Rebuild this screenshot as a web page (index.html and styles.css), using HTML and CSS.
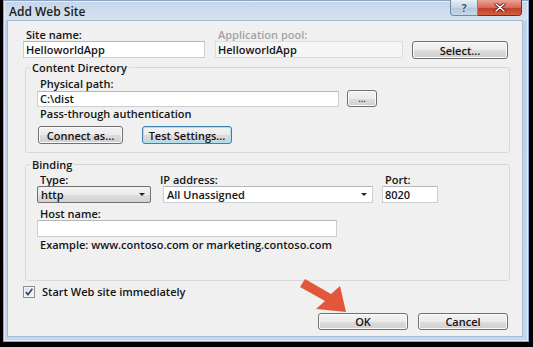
FILE: index.html
```html
<!DOCTYPE html>
<html lang="en">
<head>
    <meta charset="UTF-8">
    <meta name="viewport" content="width=device-width, initial-scale=1.0">
    <title>Add Web Site</title>
    <link rel="stylesheet" href="styles.css">
</head>
<body>
    <div class="window">
        <div class="titlebar">
            <span class="title">Add Web Site</span>
            <div class="caption-buttons">
                <span class="cap-btn help">?</span>
                <span class="cap-btn close">
                    <svg width="12" height="9" viewBox="0 0 12 9">
                        <path d="M2 1 L10 8 M10 1 L2 8" stroke="#5a1c14" stroke-width="3.2" stroke-linecap="round"/>
                        <path d="M2 1 L10 8 M10 1 L2 8" stroke="#ffffff" stroke-width="1.6" stroke-linecap="round"/>
                    </svg>
                </span>
            </div>
        </div>

        <div class="client">
            <div class="site-row">
                <div class="field site-name">
                    <label class="field-label">Site name:</label>
                    <div class="textbox">HelloworldApp</div>
                </div>
                <div class="field app-pool">
                    <label class="field-label disabled">Application pool:</label>
                    <div class="textbox readonly">HelloworldApp</div>
                </div>
                <button class="btn select-btn">Select...</button>
            </div>

            <fieldset class="group content-dir">
                <legend>Content Directory</legend>
                <label class="field-label">Physical path:</label>
                <div class="path-row">
                    <div class="textbox path-box">C:\dist</div>
                    <button class="btn browse-btn">...</button>
                </div>
                <div class="field-label">Pass-through authentication</div>
                <div class="auth-buttons">
                    <button class="btn connect-btn">Connect as...</button>
                    <button class="btn focused test-btn">Test Settings...</button>
                </div>
            </fieldset>

            <fieldset class="group binding">
                <legend>Binding</legend>
                <div class="binding-row">
                    <div class="field type-field">
                        <label class="field-label">Type:</label>
                        <div class="combo combo-button">http<span class="combo-arrow"></span></div>
                    </div>
                    <div class="field ip-field">
                        <label class="field-label">IP address:</label>
                        <div class="combo combo-edit">All Unassigned<span class="combo-arrow"></span></div>
                    </div>
                    <div class="field port-field">
                        <label class="field-label">Port:</label>
                        <div class="textbox">8020</div>
                    </div>
                </div>
                <label class="field-label host-label">Host name:</label>
                <div class="textbox host-box"></div>
                <div class="field-label example">Example: www.contoso.com or marketing.contoso.com</div>
            </fieldset>

            <div class="start-row">
                <span class="checkbox">
                    <svg width="10" height="10" viewBox="0 0 10 10">
                        <path d="M1.8 5 L4 7.6 L8.4 1.8" fill="none" stroke="#2b4a78" stroke-width="1.6"/>
                    </svg>
                </span>
                <span>Start Web site immediately</span>
            </div>

            <div class="footer">
                <button class="btn dialog-btn">OK</button>
                <button class="btn dialog-btn">Cancel</button>
            </div>

            <svg class="pointer-arrow" width="50" height="36" viewBox="298 278 50 36">
                <polygon points="305,279 331,294 340,286 346,312 316,309 325,301 300,287" fill="#e2573a"/>
            </svg>
        </div>
    </div>
</body>
</html>
```

FILE: styles.css
```css
:root {
  --client-bg: #f0f0f0;
  --text: #141414;
  --btn-border: #707070;
  --box-border: #c9ced4;
  --group-border: #d3d9de;
}

* {
  box-sizing: border-box;
}

body {
  margin: 0;
  width: 533px;
  height: 347px;
  overflow: hidden;
  background: #000;
  font-family: "Open Sans", "Noto Sans", sans-serif;
  font-size: 11px;
  font-weight: 600;
  color: var(--text);
}

.window {
  margin-left: 3px;
  width: 526px;
  height: 342px;
  display: flex;
  flex-direction: column;
  background: linear-gradient(to bottom, #c4d4e8 0, #d6e2f0 20px, #bcd2ea 21px, #c3d7ed 100%);
  box-shadow: inset 0 0 0 1px #8aa4c4, inset 0 0 0 2px #e4edf7;
}

/* title bar */

.titlebar {
  height: 21px;
  display: flex;
  justify-content: space-between;
  align-items: flex-start;
  padding: 0 7px 0 6px;
}

.title {
  font-size: 12px;
  line-height: 23px;
  color: #1c1c1c;
}

.caption-buttons {
  display: flex;
}

.cap-btn {
  height: 16px;
  display: flex;
  align-items: center;
  justify-content: center;
  border: 1px solid;
  border-top: none;
}

.help {
  width: 28px;
  border-color: #7089a8;
  border-radius: 0 0 0 4px;
  background: linear-gradient(#e6eef7, #c6d5e6 50%, #b4c7dd 51%, #c9d8ea);
  color: #3d4f66;
  font-size: 11px;
  font-weight: 700;
  line-height: 14px;
  text-shadow: 0 0 2px #fff;
}

.close {
  width: 44px;
  border-color: #7a2a20;
  border-left: none;
  border-radius: 0 0 4px 0;
  background: linear-gradient(#eba497, #d66a57 50%, #c23a27 51%, #d3603e);
}

/* client area */

.client {
  position: relative;
  margin: 0 7px 0 5px;
  height: 315px;
  background: var(--client-bg);
  box-shadow: 0 0 0 1px #a7bad1;
}

.site-row {
  display: flex;
  align-items: flex-end;
  padding: 7px 14px 0 15px;
}

.field {
  display: flex;
  flex-direction: column;
}

.site-name {
  width: 182px;
  margin-right: 10px;
}

.app-pool {
  width: 188px;
  margin-right: 9px;
}

.field-label {
  display: block;
  line-height: 13px;
  padding-left: 3px;
  white-space: nowrap;
}

.field-label.disabled {
  color: #a3a3a3;
}

.textbox {
  height: 17px;
  background: #fff;
  border: 1px solid var(--box-border);
  border-top-color: #b3b6bb;
  padding-left: 2px;
  line-height: 15px;
  white-space: nowrap;
}

.textbox.readonly {
  background: #f5f5f5;
  border-color: #dcdcdc;
}

.btn {
  height: 18px;
  padding: 0;
  font: inherit;
  color: var(--text);
  border: 1px solid var(--btn-border);
  border-radius: 3px;
  background: linear-gradient(#f3f3f3 0%, #ebebeb 50%, #dddddd 51%, #cfcfcf 100%);
  box-shadow: inset 0 0 0 1px #fbfbfb;
}

.btn.focused {
  border-color: #3c7fb1;
  box-shadow: inset 0 0 0 1px #a8e0f9;
}

.select-btn {
  width: 96px;
  margin-bottom: -1px;
}

/* group boxes */

.group {
  margin: 3px 12px 0 17px;
  padding: 3px 11px 8px 11px;
  border: 1px solid var(--group-border);
  border-radius: 3px;
  min-width: 0;
}

.group legend {
  margin-left: -7px;
  padding: 0 2px;
  line-height: 13px;
}

.path-row {
  display: flex;
  align-items: center;
  gap: 8px;
}

.path-box {
  width: 302px;
  height: 16px;
  line-height: 14px;
}

.browse-btn {
  width: 30px;
  height: 17px;
  font-size: 9px;
  line-height: 10px;
}

.auth-buttons {
  display: flex;
  gap: 19px;
  margin: 6px 0 0 1px;
}

.connect-btn {
  width: 85px;
}

.test-btn {
  width: 90px;
}

.binding {
  margin-top: 5px;
  padding: 2px 11px 29px 11px;
}

.binding-row {
  display: flex;
}

.type-field {
  width: 114px;
  margin-right: 12px;
}

.ip-field {
  width: 210px;
  margin-right: 9px;
}

.ip-field .field-label {
  padding-left: 0;
  margin-left: -3px;
}

.port-field {
  width: 56px;
}

.combo {
  position: relative;
  height: 17px;
  line-height: 15px;
  padding-left: 3px;
  white-space: nowrap;
}

.combo-button {
  border: 1px solid var(--btn-border);
  border-radius: 2px;
  background: linear-gradient(#f3f3f3 0%, #ebebeb 50%, #dddddd 51%, #d2d2d2 100%);
}

.combo-edit {
  background: #fff;
  border: 1px solid var(--box-border);
  border-top-color: #b3b6bb;
}

.combo-arrow {
  position: absolute;
  right: 5px;
  top: 6px;
  border-left: 3px solid transparent;
  border-right: 3px solid transparent;
  border-top: 3px solid #222;
}

.host-label {
  margin-top: 4px;
}

.host-box {
  width: 300px;
}

.example {
  margin-top: 1px;
}

/* bottom */

.start-row {
  display: flex;
  align-items: center;
  gap: 7px;
  margin: 4px 0 0 15px;
  line-height: 13px;
}

.checkbox {
  width: 12px;
  height: 12px;
  display: flex;
  align-items: center;
  justify-content: center;
  border: 1px solid #8e8f8f;
  background: linear-gradient(135deg, #dcdcdc, #fdfdfd);
  box-shadow: inset 0 0 0 1px #f4f4f4;
}

.footer {
  display: flex;
  justify-content: flex-end;
  gap: 10px;
  margin-top: 15px;
  padding-right: 14px;
}

.dialog-btn {
  width: 90px;
  height: 17px;
  line-height: 13px;
}

.pointer-arrow {
  position: absolute;
  left: 290px;
  top: 257px;
}
```
